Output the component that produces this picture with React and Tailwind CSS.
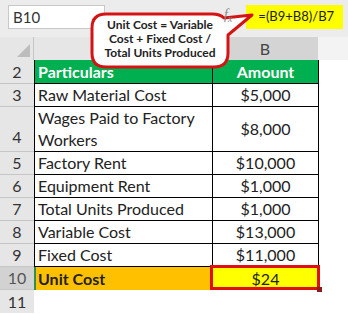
import React from 'react';

const rows = [
  { n: '3', a: 'Raw Material Cost', b: '$5,000' },
  { n: '4', a: 'Wages Paid to Factory Workers', b: '$8,000', tall: true },
  { n: '5', a: 'Factory Rent', b: '$10,000' },
  { n: '6', a: 'Equipment Rent', b: '$1,000' },
  { n: '7', a: 'Total Units Produced', b: '$1,000' },
  { n: '8', a: 'Variable Cost', b: '$13,000' },
  { n: '9', a: 'Fixed Cost', b: '$11,000' },
];

function Callout() {
  // speech bubble over the formula bar, tail points at the formula
  return (
    <div className="absolute left-[88px] top-0 w-[170px] h-[72px]">
      <svg width="170" height="72" className="absolute inset-0">
        <path
          d="M18 14 H124 Q132 14 136 18 L164 15 L140 35 V53 Q140 67 126 67 H18 Q4 67 4 53 V28 Q4 14 18 14 Z"
          fill="#fff"
          stroke="#d41414"
          strokeWidth="3"
          strokeLinejoin="round"
        />
      </svg>
      <div className="absolute left-[4px] top-[18px] w-[136px] flex flex-col items-center text-[12px] leading-[14px] font-bold text-[#222] whitespace-nowrap">
        <span>Unit Cost = Variable</span>
        <span>Cost + Fixed Cost /</span>
        <span>Total Units Produced</span>
      </div>
    </div>
  );
}

export default function App() {
  return (
    <div className="relative w-[348px] h-[314px] overflow-hidden bg-white font-['Lato','Liberation_Sans',sans-serif]">
      {/* formula bar */}
      <div className="h-[37px] bg-[#ececec] flex items-start pt-[5px]">
        <div className="ml-[8px] w-[97px] h-[24px] bg-white border border-[#c8c8c8] flex items-center pl-[4px] text-[15px] text-[#333]">
          B10
        </div>
        <span className="relative z-10 ml-[119px] -mt-[1px] text-[14px] italic text-[#8a8a8a] font-['Liberation_Serif',serif]">
          f<sub className="text-[10px]">x</sub>
        </span>
        <div className="ml-[14px] w-[97px] h-[24px] bg-[#ffff00] flex items-center pl-[12px] text-[13px] text-[#222] whitespace-nowrap">
          =(B9+B8)/B7
        </div>
      </div>

      {/* column headers */}
      <div className="flex h-[23px]">
        <div className="w-[34px] bg-[#e6e6e6] border-r border-[#c6c6c6] flex items-end justify-end pr-[3px] pb-[3px]">
          <div className="w-0 h-0 border-l-[13px] border-l-transparent border-b-[13px] border-b-[#bdbdbd]" />
        </div>
        <div className="w-[178px] bg-[#e6e6e6] border-r border-[#c6c6c6]" />
        <div className="w-[106px] bg-[#d4d4d4] flex items-center justify-center text-[16px] text-[#444]">B</div>
        <div className="flex-1 bg-[#f3f3f3]" />
      </div>

      {/* header row */}
      <div className="flex h-[24px]">
        <div className="w-[34px] bg-[#e6e6e6] border-b border-[#c6c6c6] flex items-center justify-center text-[16px] text-[#333]">2</div>
        <div className="w-[178px] bg-[#00b050] border-l border-b border-black pl-[3px] flex items-center text-[16px] font-bold text-white">
          Particulars
        </div>
        <div className="w-[107px] bg-[#00b050] border-l border-r border-b border-black flex items-center justify-center text-[16px] font-bold text-white">
          Amount
        </div>
      </div>

      {rows.map((r) => (
        <div key={r.n} className={`flex ${r.tall ? 'h-[45px]' : 'h-[23px]'}`}>
          <div className={`w-[34px] bg-[#e6e6e6] border-b border-[#c6c6c6] flex justify-center text-[16px] text-[#333] ${r.tall ? 'items-end pb-[2px]' : 'items-center'}`}>
            {r.n}
          </div>
          <div className="w-[178px] border-l border-b border-black pl-[3px] flex items-center text-[16px] leading-[22px] text-[#222]">
            {r.a}
          </div>
          <div className="w-[107px] border-l border-r border-b border-black flex items-center justify-center text-[16px] text-[#222]">
            {r.b}
          </div>
        </div>
      ))}

      {/* unit cost row */}
      <div className="flex h-[23px]">
        <div className="w-[34px] bg-[#d2d2d2] border-b border-[#c6c6c6] flex items-center justify-center text-[16px] text-[#555]">10</div>
        <div className="w-[178px] bg-[#ffc000] border-l-2 border-l-[#2f8f4f] pl-[2px] flex items-center text-[16px] font-bold text-[#222]">
          Unit Cost
        </div>
        <div className="relative w-[107px] bg-[#ffff00] flex items-center justify-center text-[16px] text-[#222]">
          $24
          <div className="absolute -left-[2px] -top-[2px] -right-[1px] bottom-0 border-[3px] border-[#e01010]" />
          <div className="absolute -right-[3px] -bottom-[2px] w-[5px] h-[5px] bg-[#8a1c1c]" />
        </div>
      </div>

      <div className="flex h-[23px]">
        <div className="w-[34px] bg-[#e6e6e6] flex items-center justify-center text-[16px] text-[#333]">11</div>
      </div>

      <Callout />
    </div>
  );
}
